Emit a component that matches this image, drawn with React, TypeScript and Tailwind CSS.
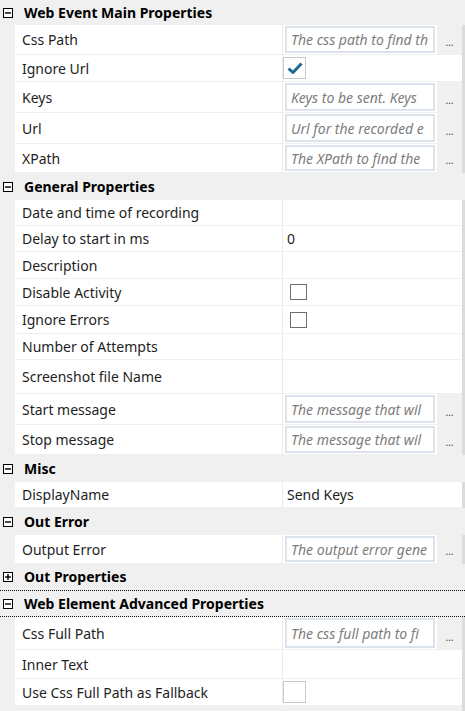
import React from "react";

type Row =
  | { kind: "header"; title: string; h: number; open: boolean; focus?: boolean }
  | { kind: "text"; label: string; h: number; placeholder: string }
  | { kind: "plain"; label: string; h: number; value?: string }
  | { kind: "check"; label: string; h: number; checked?: boolean; big?: boolean };

const rows: Row[] = [
  { kind: "header", title: "Web Event Main Properties", h: 25, open: true },
  { kind: "text", label: "Css Path", h: 30, placeholder: "The css path to find th" },
  { kind: "check", label: "Ignore Url", h: 27, checked: true, big: true },
  { kind: "text", label: "Keys", h: 31, placeholder: "Keys to be sent. Keys" },
  { kind: "text", label: "Url", h: 31, placeholder: "Url for the recorded e" },
  { kind: "text", label: "XPath", h: 29, placeholder: "The XPath to find the" },
  { kind: "header", title: "General Properties", h: 27, open: true },
  { kind: "plain", label: "Date and time of recording", h: 26 },
  { kind: "plain", label: "Delay to start in ms", h: 26, value: "0" },
  { kind: "plain", label: "Description", h: 27 },
  { kind: "check", label: "Disable Activity", h: 27 },
  { kind: "check", label: "Ignore Errors", h: 28 },
  { kind: "plain", label: "Number of Attempts", h: 26 },
  { kind: "plain", label: "Screenshot file Name", h: 34 },
  { kind: "text", label: "Start message", h: 31, placeholder: "The message that wil" },
  { kind: "text", label: "Stop message", h: 30, placeholder: "The message that wil" },
  { kind: "header", title: "Misc", h: 27, open: true },
  { kind: "plain", label: "DisplayName", h: 26, value: "Send Keys" },
  { kind: "header", title: "Out Error", h: 27, open: true },
  { kind: "text", label: "Output Error", h: 29, placeholder: "The output error gene" },
  { kind: "header", title: "Out Properties", h: 26, open: false },
  { kind: "header", title: "Web Element Advanced Properties", h: 27, open: true, focus: true },
  { kind: "text", label: "Css Full Path", h: 33, placeholder: "The css full path to fi" },
  { kind: "plain", label: "Inner Text", h: 29 },
  { kind: "check", label: "Use Css Full Path as Fallback", h: 27, big: true },
];

const font = { fontFamily: '"Noto Sans", "Open Sans", sans-serif' };

function ToggleBox({ open }: { open: boolean }) {
  return (
    <svg width="10" height="10" viewBox="0 0 10 10" className="shrink-0">
      <rect x="0.5" y="0.5" width="9" height="9" fill="white" stroke="#000" strokeWidth="1" />
      <line x1="2" y1="5" x2="8" y2="5" stroke="#000" strokeWidth="1.4" />
      {!open && <line x1="5" y1="2" x2="5" y2="8" stroke="#000" strokeWidth="1.4" />}
    </svg>
  );
}

function Header({ row }: { row: Extract<Row, { kind: "header" }> }) {
  return (
    <div className="relative z-10 bg-[#f0f0f0] flex items-center pl-[3px] shrink-0" style={{ height: row.h }}>
      <ToggleBox open={row.open} />
      <span className="ml-[11px] text-[14px] font-bold text-black leading-none">{row.title}</span>
      {row.focus && (
        <>
          <div className="absolute left-0 right-0 top-0 h-px bg-[repeating-linear-gradient(90deg,#111_0px,#111_1px,transparent_1px,transparent_2px)]" />
          <div className="absolute left-0 right-0 bottom-0 h-px bg-[repeating-linear-gradient(90deg,#111_0px,#111_1px,transparent_1px,transparent_2px)]" />
        </>
      )}
    </div>
  );
}

function PropRow({ row }: { row: Exclude<Row, { kind: "header" }> }) {
  return (
    <div className="flex shrink-0 ml-[15px] mr-[3px] border-b border-[#f0f0f0] bg-white" style={{ height: row.h }}>
      <div className="w-[267px] shrink-0 flex items-center pl-[7px] text-[14px] text-[#1e1e1e]">
        {row.label}
      </div>
      <div className="w-px bg-[#ececec] shrink-0" />
      <div className="flex-1 flex items-stretch min-w-0">
        {row.kind === "text" && (
          <>
            <div className="ml-[2px] my-[1px] w-[150px] border-2 border-[#dde3ec] bg-white flex items-center pl-[4px] overflow-hidden whitespace-nowrap">
              <span className="italic text-[14px] text-[#7d7d7d]">{row.placeholder}</span>
            </div>
            <div className="ml-[2px] flex-1 bg-[#f0f0f0] flex items-end justify-center pb-[7px] text-[10px] text-[#444] leading-none">
              ...
            </div>
          </>
        )}
        {row.kind === "plain" && (
          <div className="flex items-center pl-[4px] text-[14px] text-[#1e1e1e]">{row.value}</div>
        )}
        {row.kind === "check" &&
          (row.big ? (
            <div className="flex items-center">
              <div className="w-[23px] h-[22px] border border-[#c9c9c9] bg-white flex items-center justify-center">
                {row.checked && (
                  <svg width="16" height="12" viewBox="0 0 16 12">
                    <path d="M1.5 6.5 L6 10.5 L14.5 1.5" fill="none" stroke="#1f6a94" strokeWidth="3" />
                  </svg>
                )}
              </div>
            </div>
          ) : (
            <div className="flex items-center pl-[7px]">
              <div className="w-[17px] h-[16px] border border-[#6e6e6e] bg-white" />
            </div>
          ))}
      </div>
    </div>
  );
}

export default function App() {
  return (
    <div className="w-[465px] h-[711px] bg-[#f0f0f0] overflow-hidden relative" style={font}>
      <div className="absolute top-0 right-0 w-[3px] h-full bg-[#dcdcdc]" />
      <div className="flex flex-col relative">
        {rows.map((r, i) =>
          r.kind === "header" ? <Header key={i} row={r} /> : <PropRow key={i} row={r} />
        )}
      </div>
    </div>
  );
}
